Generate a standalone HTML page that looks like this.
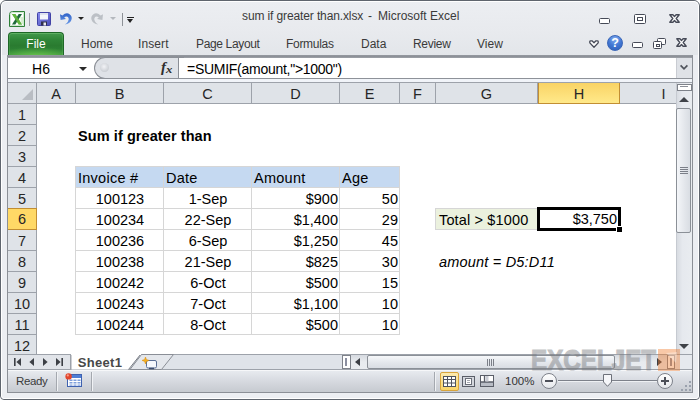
<!DOCTYPE html>
<html><head><meta charset="utf-8"><title>sum if greater than.xlsx - Microsoft Excel</title>
<style>
*{box-sizing:border-box;margin:0;padding:0}
html,body{width:700px;height:400px;overflow:hidden;background:#fff}
body{font-family:"Liberation Sans",sans-serif;position:relative}
.abs,.abs *{position:absolute}
svg{position:absolute;overflow:visible}
#win{position:absolute;left:0;top:0;width:700px;height:400px;background:#eceef2;border:1px solid #5f656e;border-radius:6px 6px 4px 4px;overflow:hidden}
#win:before{content:"";position:absolute;left:0;top:0;right:0;bottom:0;border:1px solid #fff;border-radius:5px 5px 3px 3px;z-index:50;pointer-events:none}
#stage{position:absolute;left:-1px;top:-1px;width:700px;height:400px}
#title{left:2px;top:2px;width:696px;height:30px;background:linear-gradient(#eceef2,#e8eaee)}
#tabs{left:2px;top:32px;width:696px;height:23px;background:linear-gradient(#e8eaee,#e3e6ea)}
.tt{position:absolute;top:9px;left:0;width:700px;text-align:center;font-size:12px;color:#3a3a3a;white-space:pre}
.tab{position:absolute;top:37px;font-size:12px;color:#3a3a3a;white-space:nowrap}
#file{left:8px;top:32px;width:56px;height:24px;border:1px solid #1e6727;border-bottom:none;border-radius:4px 4px 0 0;background:radial-gradient(ellipse 85% 50% at 50% 112%,#86d65e 0%,rgba(100,190,75,.85) 40%,rgba(60,150,60,0) 100%),linear-gradient(#43994b 0%,#2f8537 30%,#2a7b30 55%,#318a39 100%);box-shadow:inset 0 1px 0 rgba(150,220,150,.35),inset 1px 0 0 rgba(120,200,120,.25),inset -1px 0 0 rgba(120,200,120,.25);color:#fff;font-size:12px;text-align:center;line-height:22px}
#fbar{left:7px;top:55px;width:686px;height:28px;background:#dfe2e7}
#grid{left:8px;top:83px;width:668px;height:271px;background:#fff;overflow:hidden}
.ch{top:0;height:20px;background:#dfe3e8;border-right:1px solid #9da2aa;font-size:14.5px;color:#262626;text-align:center;line-height:22px}
.rh{left:0;width:29px;height:21px;background:#dfe3e8;border-right:1px solid #9da2aa;border-bottom:1px solid #9da2aa;font-size:14.5px;color:#262626;text-align:center;line-height:23px}
.c{height:22px;font-size:14.5px;line-height:23px;color:#000;white-space:nowrap;border:1px solid #d6d6d6;padding:0 2px}
.r{text-align:right}
.t{font-size:14.5px;line-height:23px;height:22px;color:#000;white-space:nowrap}
</style></head><body>
<div id="win"><div id="stage">
<div id="title" class="abs"></div>
<div id="tabs" class="abs"></div>
<div class="tt" style="left:242px;width:auto;letter-spacing:-.12px" id="t1">sum if greater than.xlsx</div>
<div class="tt" style="left:368px;width:auto">-</div>
<div class="tt" style="left:378px;width:auto" id="t2">Microsoft Excel</div>
<div id="file" class="abs">File</div>
<div class="tab" style="left:81px;letter-spacing:0px">Home</div>
<div class="tab" style="left:138px;letter-spacing:0.1px">Insert</div>
<div class="tab" style="left:196px;letter-spacing:-0.35px">Page Layout</div>
<div class="tab" style="left:286px;letter-spacing:-0.3px">Formulas</div>
<div class="tab" style="left:361px;letter-spacing:0px">Data</div>
<div class="tab" style="left:413px;letter-spacing:-0.3px">Review</div>
<div class="tab" style="left:477px;letter-spacing:0px">View</div>
<div id="fbar" class="abs">
<div style="left:0;top:0;width:686px;height:3px;background:linear-gradient(#969aa1,#8b8f96 60%,#a3a7ad)"></div>
<div style="left:0;top:3px;width:1px;height:25px;background:#8b8f96"></div>
<div style="left:1px;top:3px;width:100px;height:20px;background:#fff"></div>
<div style="left:1px;top:3px;width:66px;height:20px;font-size:14px;line-height:22px;text-align:center;color:#000" id="nb">H6</div>
<div style="left:72px;top:12px;width:0;height:0;border-left:4px solid transparent;border-right:4px solid transparent;border-top:4px solid #2a2a2a"></div>
<div style="left:87px;top:2px;width:90px;height:22px;border:1px solid #8b8f96;border-right:none;border-radius:11px 0 0 11px;background:#dfe2e7"></div>
<div style="left:93px;top:8px;width:9px;height:9px;border-radius:5px;background:radial-gradient(circle at 45% 40%,#f2f3f6,#c3c7cd 85%)"></div>
<div style="left:154px;top:3px;width:18px;height:20px;font-family:'Liberation Serif',serif;font-style:italic;font-weight:bold;font-size:15px;line-height:19px;color:#2e2e2e;white-space:nowrap" id="fx">f<span style="position:relative;top:1px;left:-.5px;font-size:11px;display:inline-block;transform:scaleX(1.15);transform-origin:0 50%">x</span></div>
<div style="left:171px;top:3px;width:1px;height:20px;background:#8b8f96"></div>
<div style="left:172px;top:3px;width:497px;height:20px;background:#fff"></div>
<div style="left:180px;top:3px;height:20px;font-size:14px;line-height:22px;letter-spacing:-.27px;color:#000;white-space:nowrap" id="ftxt">=SUMIF(amount,"&gt;1000")</div>
<div style="left:669px;top:3px;width:16px;height:20px;background:#dfe2e7;border-left:1px solid #c9ccd2"></div>
<svg style="left:672px;top:9px" width="10" height="8"><path d="M1.6 1.4 L5 4.8 L8.4 1.4" fill="none" stroke="#50545c" stroke-width="1.7"/></svg>
<div style="left:1px;top:23px;width:685px;height:1px;background:#8e9299"></div>
<div style="left:1px;top:24px;width:685px;height:3px;background:#f1f4f9"></div>
<div style="left:1px;top:27px;width:685px;height:1px;background:#9da2aa"></div>
</div>
<div id="grid" class="abs">
<div class="ch" style="left:0;width:29px"></div>
<svg style="left:14px;top:6px" width="12" height="12"><path d="M11 0 L11 11 L0 11 Z" fill="#b9bdc3"/></svg>
<div class="ch" style="left:29px;width:39px">A</div>
<div class="ch" style="left:68px;width:88px">B</div>
<div class="ch" style="left:156px;width:88px">C</div>
<div class="ch" style="left:244px;width:88px">D</div>
<div class="ch" style="left:332px;width:60px">E</div>
<div class="ch" style="left:392px;width:36px">F</div>
<div class="ch" style="left:428px;width:102px">G</div>
<div class="ch" style="left:530px;width:82px;background:linear-gradient(#f9d365,#ffe98a);border:1px solid #c28e33;border-top:none;border-bottom:none">H</div>
<div class="ch" style="left:612px;width:88px">I</div>
<div style="left:0;top:20px;width:668px;height:1px;background:#9da2aa"></div>
<div style="left:530px;top:20px;width:82px;height:1px;background:#c28e33"></div>
<div class="rh" style="top:21px">1</div>
<div class="rh" style="top:42px">2</div>
<div class="rh" style="top:63px">3</div>
<div class="rh" style="top:84px">4</div>
<div class="rh" style="top:105px">5</div>
<div class="rh" style="top:125px;height:22px;background:#ffd966;border:1px solid #c28e33;border-left:none;line-height:21px">6</div>
<div class="rh" style="top:147px">7</div>
<div class="rh" style="top:168px">8</div>
<div class="rh" style="top:189px">9</div>
<div class="rh" style="top:210px">10</div>
<div class="rh" style="top:231px">11</div>
<div class="rh" style="top:252px">12</div>
<div class="t" style="left:70px;top:42px;font-weight:bold;letter-spacing:.08px" id="ttl">Sum if greater than</div>
<div class="c " style="left:67px;top:83px;width:89px;background:#c5d9f1;letter-spacing:.25px;padding-left:2px;">Invoice #</div>
<div class="c " style="left:155px;top:83px;width:89px;background:#c5d9f1;letter-spacing:.25px;padding-left:2px;">Date</div>
<div class="c " style="left:243px;top:83px;width:89px;background:#c5d9f1;letter-spacing:.25px;padding-left:2px;">Amount</div>
<div class="c " style="left:331px;top:83px;width:61px;background:#c5d9f1;letter-spacing:.25px;padding-left:2px;">Age</div>
<div class="c " style="left:67px;top:104px;width:89px;text-align:center;padding:0 0 0 1px;">100123</div>
<div class="c " style="left:155px;top:104px;width:89px;text-align:center;padding:0 0 0 1px;">1-Sep</div>
<div class="c " style="left:243px;top:104px;width:89px;text-align:right;padding-right:1px;">$900</div>
<div class="c " style="left:331px;top:104px;width:61px;text-align:right;padding-right:1px;">50</div>
<div class="c " style="left:67px;top:125px;width:89px;text-align:center;padding:0 0 0 1px;">100234</div>
<div class="c " style="left:155px;top:125px;width:89px;text-align:center;padding:0 0 0 1px;">22-Sep</div>
<div class="c " style="left:243px;top:125px;width:89px;text-align:right;padding-right:1px;">$1,400</div>
<div class="c " style="left:331px;top:125px;width:61px;text-align:right;padding-right:1px;">29</div>
<div class="c " style="left:67px;top:146px;width:89px;text-align:center;padding:0 0 0 1px;">100236</div>
<div class="c " style="left:155px;top:146px;width:89px;text-align:center;padding:0 0 0 1px;">6-Sep</div>
<div class="c " style="left:243px;top:146px;width:89px;text-align:right;padding-right:1px;">$1,250</div>
<div class="c " style="left:331px;top:146px;width:61px;text-align:right;padding-right:1px;">45</div>
<div class="c " style="left:67px;top:167px;width:89px;text-align:center;padding:0 0 0 1px;">100238</div>
<div class="c " style="left:155px;top:167px;width:89px;text-align:center;padding:0 0 0 1px;">21-Sep</div>
<div class="c " style="left:243px;top:167px;width:89px;text-align:right;padding-right:1px;">$825</div>
<div class="c " style="left:331px;top:167px;width:61px;text-align:right;padding-right:1px;">30</div>
<div class="c " style="left:67px;top:188px;width:89px;text-align:center;padding:0 0 0 1px;">100242</div>
<div class="c " style="left:155px;top:188px;width:89px;text-align:center;padding:0 0 0 1px;">6-Oct</div>
<div class="c " style="left:243px;top:188px;width:89px;text-align:right;padding-right:1px;">$500</div>
<div class="c " style="left:331px;top:188px;width:61px;text-align:right;padding-right:1px;">15</div>
<div class="c " style="left:67px;top:209px;width:89px;text-align:center;padding:0 0 0 1px;">100243</div>
<div class="c " style="left:155px;top:209px;width:89px;text-align:center;padding:0 0 0 1px;">7-Oct</div>
<div class="c " style="left:243px;top:209px;width:89px;text-align:right;padding-right:1px;">$1,100</div>
<div class="c " style="left:331px;top:209px;width:61px;text-align:right;padding-right:1px;">10</div>
<div class="c " style="left:67px;top:230px;width:89px;text-align:center;padding:0 0 0 1px;">100244</div>
<div class="c " style="left:155px;top:230px;width:89px;text-align:center;padding:0 0 0 1px;">8-Oct</div>
<div class="c " style="left:243px;top:230px;width:89px;text-align:right;padding-right:1px;">$500</div>
<div class="c " style="left:331px;top:230px;width:61px;text-align:right;padding-right:1px;">10</div>
<div class="c " style="left:427px;top:125px;width:103px;background:#ebf1de;border-color:#d6d6d6;letter-spacing:.15px;padding-left:3px;">Total &gt; $1000</div>
<div style="left:529px;top:124px;width:84px;height:24px;border:3px solid #000;background:#fff"></div>
<div class="t r" style="left:532px;top:125px;width:77px;" id="h6">$3,750</div>
<div style="left:608px;top:143px;width:7px;height:7px;background:#000;border:1px solid #fff;border-right:none;border-bottom:none;width:6px;height:6px"></div>
<div class="t" style="left:431px;top:168px;font-style:italic;letter-spacing:.2px" id="g8">amount = D5:D11</div>
</div>
<div class="abs" id="qat" style="left:0;top:0;width:700px;height:56px">
<svg style="left:9px;top:11px" width="16" height="16" viewBox="0 0 16 16"><path d="M3.5 .5 H15.5 V15.5 H.5 V3.5 Q.5 .5 3.5 .5Z" fill="#fff" stroke="#2f8038" stroke-width="1"/><path d="M1.5 4 Q1.5 1.5 4 1.5 H14.5 V14.5 H1.5Z" fill="none" stroke="#cfe8cf" stroke-width="1"/><path d="M3 3 L6.3 3 L13 13.4 L9.7 13.4Z" fill="#3f9a3a"/><path d="M9.7 3 L13 3 L6.3 13.4 L3 13.4Z" fill="#1f6a3a"/><path d="M3 3 L6.3 3 L13 13.4 L9.7 13.4Z" fill="#6fbf3f" opacity=".75"/><path d="M11 6 L14 6 L14 13 L12.5 13Z" fill="#bfe3b4" opacity=".6"/></svg>
<div style="left:29px;top:13px;width:1px;height:13px;background:#9fa3a9"></div>
<svg style="left:37px;top:12px" width="14" height="14" viewBox="0 0 14 14"><defs><linearGradient id="sv" x1="0" y1="0" x2="1" y2="1"><stop offset="0" stop-color="#8a8df0"/><stop offset="1" stop-color="#4a4db8"/></linearGradient></defs><rect x=".5" y=".5" width="13" height="13" rx="1" fill="url(#sv)" stroke="#4243a6"/><rect x="3" y="1" width="8" height="6.5" fill="#f4f6fb"/><rect x="3" y="1" width="8" height="2" fill="#dfe4ef"/><rect x="4" y="9.5" width="6" height="4" fill="#30304a"/><rect x="6.5" y="10.5" width="2.5" height="3" fill="#e8e8f0"/></svg>
<svg style="left:59px;top:12px" width="14" height="14" viewBox="0 0 14 14"><defs><linearGradient id="ud" x1="0" y1="0" x2="0" y2="1"><stop offset="0" stop-color="#2f62c8"/><stop offset="1" stop-color="#6f9de8"/></linearGradient></defs><path d="M1 2.2 L1.6 8 L7 7 L5.2 5.4 Q7.4 3.6 9 5 Q10.6 6.8 9 9.4 Q8 11.2 5.6 12.6 Q11 11.6 12.4 8 Q13.6 4.4 10.6 2.2 Q7.2 0 3.4 3.6Z" fill="url(#ud)"/></svg>
<div style="left:78px;top:17px;width:0;height:0;border-left:3px solid transparent;border-right:3px solid transparent;border-top:3px solid #222"></div>
<svg style="left:90px;top:12px" width="14" height="14" viewBox="0 0 14 14"><path transform="translate(14,0) scale(-1,1)" d="M1 2.2 L1.6 8 L7 7 L5.2 5.4 Q7.4 3.6 9 5 Q10.6 6.8 9 9.4 Q8 11.2 5.6 12.6 Q11 11.6 12.4 8 Q13.6 4.4 10.6 2.2 Q7.2 0 3.4 3.6Z" fill="#bcc0c6"/></svg>
<div style="left:110px;top:17px;width:0;height:0;border-left:3px solid transparent;border-right:3px solid transparent;border-top:3px solid #b4b8be"></div>
<div style="left:122px;top:13px;width:1px;height:13px;background:#8d9197"></div>
<div style="left:127px;top:16.5px;width:7px;height:1px;background:#222"></div>
<div style="left:127px;top:19px;width:0;height:0;border-left:3.5px solid transparent;border-right:3.5px solid transparent;border-top:4px solid #222"></div>
<div style="left:599px;top:18px;width:11px;height:5.5px;border:1.5px solid #464a57;border-radius:1.5px;background:#fff"></div>
<div style="left:634px;top:14px;width:11.5px;height:9.5px;border:1.5px solid #464a57;border-radius:1.5px;background:#fff"></div>
<div style="left:637px;top:17px;width:5.5px;height:3.5px;border:1.2px solid #464a57;border-radius:.5px;background:#fff"></div>
<svg style="left:669px;top:14px" width="11" height="9" viewBox="0 0 11 9"><path d="M.8 .8 L3.9 .8 L5.5 2.5 L7.1 .8 L10.2 .8 L7.2 4.5 L10.2 8.2 L7.1 8.2 L5.5 6.5 L3.9 8.2 L.8 8.2 L3.8 4.5Z" fill="#fff" stroke="#464a57" stroke-width="1.4" stroke-linejoin="round"/></svg>
<svg style="left:589px;top:40px" width="10" height="8" viewBox="0 0 10 8"><path d="M.8 1.6 Q.8 .8 1.8 .8 L3 .8 L5 2.7 L7 .8 L8.2 .8 Q9.2 .8 9.2 1.6 L9.2 2.9 L5 7.2 L.8 2.9Z" fill="#fff" stroke="#464a57" stroke-width="1.3" stroke-linejoin="round"/></svg>
<div style="left:607px;top:35px;width:16px;height:16px;border-radius:8px;background:radial-gradient(circle at 50% 22%,#86aef0 0%,#4278d4 50%,#2d5db8 100%);border:1px solid #3a66b8"></div>
<div style="left:607px;top:35px;width:16px;height:16px;color:#fff;font-weight:bold;font-size:12.5px;line-height:16.5px;text-align:center">?</div>
<div style="left:632px;top:42px;width:11px;height:5.5px;border:1.5px solid #464a57;border-radius:1.5px;background:#fff"></div>
<div style="left:656.5px;top:38px;width:9px;height:7px;border:1.4px solid #464a57;border-radius:1.5px;background:#fff"></div>
<div style="left:653px;top:41px;width:9px;height:8px;border:1.4px solid #464a57;border-radius:1.5px;background:#fff"></div>
<div style="left:655.5px;top:43.5px;width:4px;height:3px;border:1px solid #464a57;background:#fff"></div>
<svg style="left:676px;top:38px" width="11" height="9" viewBox="0 0 11 9"><path d="M.8 .8 L3.9 .8 L5.5 2.5 L7.1 .8 L10.2 .8 L7.2 4.5 L10.2 8.2 L7.1 8.2 L5.5 6.5 L3.9 8.2 L.8 8.2 L3.8 4.5Z" fill="#fff" stroke="#464a57" stroke-width="1.4" stroke-linejoin="round"/></svg>
</div>
<div class="abs" id="vsb" style="left:676px;top:83px;width:16px;height:271px;background:linear-gradient(90deg,#d5d9df,#e6e9ee 40%,#e9ecf0)">
<div style="left:0;top:0;width:1px;height:271px;background:#c6cad1"></div>
<div style="left:1px;top:1px;width:15px;height:7px;border:1.5px solid #7e828a;background:#fff"></div>
<div style="left:4px;top:3px;width:8px;height:1px;background:#8b8f98"></div>
<div style="left:3px;top:13.5px;width:0;height:0;border-left:5px solid transparent;border-right:5px solid transparent;border-bottom:5px solid #3f4248"></div>
<div style="left:0px;top:25px;width:15px;height:125px;border:1px solid #8b9097;border-radius:2px;background:linear-gradient(90deg,#f4f6f9,#e3e6eb 60%,#d9dde3)"></div>
<div style="left:4px;top:84px;width:8px;height:1px;background:#7b7f88"></div>
<div style="left:4px;top:86px;width:8px;height:1px;background:#7b7f88"></div>
<div style="left:4px;top:88px;width:8px;height:1px;background:#7b7f88"></div>
<div style="left:4px;top:90px;width:8px;height:1px;background:#7b7f88"></div>
<div style="left:3px;top:260.5px;width:0;height:0;border-left:5px solid transparent;border-right:5px solid transparent;border-top:5px solid #3f4248"></div>
</div>
<div class="abs" id="tabbar" style="left:8px;top:354px;width:684px;height:16px;background:#dfe3e9">
<div style="left:0;top:0;width:684px;height:1px;background:#9da2aa"></div>
<div style="left:0;top:15px;width:684px;height:1px;background:#9da2aa"></div>
<div style="left:0;top:1px;width:63px;height:14px;background:#e1e4e9;border-right:1px solid #9da2aa"></div>
<svg style="left:6px;top:4px" width="50" height="9" viewBox="0 0 50 9"><rect x="0" y="0" width="1.6" height="8" fill="#3c3f45"/><path d="M7 0 L7 8 L2.4 4Z" fill="#3c3f45"/><path d="M20 0 L20 8 L15.4 4Z" fill="#3c3f45"/><path d="M29 0 L29 8 L33.6 4Z" fill="#3c3f45"/><path d="M42 0 L42 8 L46.6 4Z" fill="#3c3f45"/><rect x="47.4" y="0" width="1.6" height="8" fill="#3c3f45"/></svg>
<svg style="left:63px;top:0" width="120" height="16" viewBox="0 0 120 16"><path d="M0 0 L69.5 0 L57.5 15.5 L0 15.5Z" fill="#fff"/><path d="M69.5 .5 L57.5 15.5" stroke="#7b7f87" fill="none"/><path d="M0 .5 L0 16" stroke="#9da2aa" fill="none"/><path d="M0 0 L70 0" stroke="#fff" stroke-width="2.2"/><path d="M70.5 .5 L102.5 .5 L90.5 15.5 L59 15.5Z" fill="#e4e7ec" stroke="#8a8e96"/></svg>
<div style="left:63px;top:0px;width:58px;height:16px;font-weight:bold;font-size:13px;letter-spacing:.35px;line-height:17px;color:#484848;text-align:center" id="sh1">Sheet1</div>
<svg style="left:133.5px;top:2.5px" width="16" height="13" viewBox="0 0 16 13"><rect x="4.5" y="3.5" width="10" height="7.5" rx="1.5" fill="#f6f8fc" stroke="#5b6f95"/><path d="M7 11.5 L12 11.5" stroke="#3f4f70" stroke-width="1.4"/><path d="M3.5 0 L4.4 2.4 L7 3.4 L4.4 4.4 L3.5 7 L2.6 4.4 L0 3.4 L2.6 2.4Z" fill="#f5b01c" stroke="#d98a10" stroke-width=".5"/></svg>
<div style="left:334px;top:1px;width:9px;height:14px;border:1px solid #7e828a;background:#fff"></div>
<div style="left:337px;top:4px;width:2px;height:8px;background:#8b8fa0"></div>
<div style="left:343px;top:1px;width:325px;height:14px;background:linear-gradient(#d6dae0,#e8ebef 50%,#e9ecf0)"></div>
<div style="left:347px;top:4px;width:0;height:0;border-top:4.5px solid transparent;border-bottom:4.5px solid transparent;border-right:5px solid #3c3f45"></div>
<div style="left:359px;top:1px;width:248px;height:14px;border:1px solid #8b9097;border-radius:2px;background:linear-gradient(#f6f8fa,#e4e7ec 55%,#d9dde3)"></div>
<div style="left:479px;top:5px;width:1px;height:7px;background:#7b7f88"></div>
<div style="left:481px;top:5px;width:1px;height:7px;background:#7b7f88"></div>
<div style="left:483px;top:5px;width:1px;height:7px;background:#7b7f88"></div>
<div style="left:485px;top:5px;width:1px;height:7px;background:#7b7f88"></div>
<div style="left:649px;top:4px;width:0;height:0;border-top:4.5px solid transparent;border-bottom:4.5px solid transparent;border-left:5px solid #3c3f45"></div>
<div style="left:659px;top:1px;width:8px;height:14px;border:1px solid #7e828a;background:#fff"></div>
<div style="left:662px;top:4px;width:2px;height:8px;background:#8b8fa0"></div>
<div style="left:668px;top:1px;width:16px;height:14px;background:#e6e9ee"></div>
</div>
<div class="abs" id="status" style="left:8px;top:370px;width:684px;height:23px;background:linear-gradient(#e9ecf0 0%,#dadde3 40%,#c6cad0 100%);border-bottom:1px solid #8b8f96">
<div style="left:0;top:0;width:684px;height:1px;background:#f6f7f9"></div>
<div style="left:8px;top:3px;font-size:11.5px;letter-spacing:-.4px;line-height:16px;color:#3a3a3a" id="rdy">Ready</div>
<div style="left:48px;top:2px;width:1px;height:19px;background:#a4a8af"></div><div style="left:49px;top:2px;width:1px;height:19px;background:#f0f2f5"></div>
<div style="left:83px;top:2px;width:1px;height:19px;background:#a4a8af"></div><div style="left:84px;top:2px;width:1px;height:19px;background:#f0f2f5"></div>
<svg style="left:57px;top:3px" width="17" height="15" viewBox="0 0 17 15"><rect x="2.5" y="1.5" width="14" height="12" fill="#fff" stroke="#3f62b0"/><rect x="3" y="2" width="13" height="3" fill="#4f7fd6"/><g fill="#7f9fdc"><rect x="4.5" y="6.5" width="3" height="1.5"/><rect x="8.5" y="6.5" width="3" height="1.5"/><rect x="12.5" y="6.5" width="3" height="1.5"/><rect x="4.5" y="9" width="3" height="1.5"/><rect x="8.5" y="9" width="3" height="1.5"/><rect x="12.5" y="9" width="3" height="1.5"/><rect x="4.5" y="11.5" width="3" height="1.2"/><rect x="8.5" y="11.5" width="3" height="1.2"/><rect x="12.5" y="11.5" width="3" height="1.2"/></g><circle cx="3.6" cy="3.4" r="3.2" fill="#e2452c"/><circle cx="2.8" cy="2.4" r="1.1" fill="#f7a08c"/></svg>
<div style="left:426px;top:2px;width:1px;height:19px;background:#a4a8af"></div><div style="left:427px;top:2px;width:1px;height:19px;background:#f0f2f5"></div>
<div style="left:432px;top:2px;width:19px;height:19px;border:1px solid #d9a53c;border-radius:2px;background:linear-gradient(#fdebb0,#fad468)"></div>
<svg style="left:435px;top:6px" width="13" height="11" viewBox="0 0 13 11"><rect x="0" y="0" width="13" height="11" fill="#4f535e"/><g fill="#fff"><rect x="1" y="1" width="3" height="2"/><rect x="5" y="1" width="3" height="2"/><rect x="9" y="1" width="3" height="2"/><rect x="1" y="4" width="3" height="2.5"/><rect x="5" y="4" width="3" height="2.5"/><rect x="9" y="4" width="3" height="2.5"/><rect x="1" y="7.5" width="3" height="2.5"/><rect x="5" y="7.5" width="3" height="2.5"/><rect x="9" y="7.5" width="3" height="2.5"/></g></svg>
<svg style="left:454px;top:6px" width="13" height="11" viewBox="0 0 13 11"><rect x=".5" y=".5" width="12" height="10" fill="#d4d7dd" stroke="#5a5e68"/><rect x="3.5" y="2.5" width="6" height="6" fill="#fff" stroke="#6a6e78"/><path d="M5 4.5 H8 M5 6.5 H8" stroke="#8a8e98" stroke-width=".8"/></svg>
<svg style="left:472px;top:5px" width="14" height="12" viewBox="0 0 14 12"><rect x=".5" y=".5" width="13" height="11" fill="#fff" stroke="#5a5e68"/><rect x="1" y="7" width="12" height="4" fill="#b9bdc6"/><path d="M4.5 .5 V7 M.5 7 H13.5" stroke="#5a5e68" stroke-width="1.3"/><rect x="5.5" y="1" width="3" height="5.5" fill="#c9ccd4"/></svg>
<div style="left:497px;top:3px;font-size:11.5px;line-height:16px;color:#333" id="zm">100%</div>
<div style="left:533px;top:3px;width:16px;height:16px;border-radius:8px;border:1px solid #7d818a;background:linear-gradient(#fefefe,#e6e8ec)"></div>
<div style="left:537px;top:10px;width:8px;height:2px;background:#4d5059"></div>
<div style="left:550px;top:10px;width:99px;height:1px;background:#7d818a"></div><div style="left:550px;top:11px;width:99px;height:1px;background:#eef0f3"></div>
<svg style="left:595px;top:4px" width="9" height="13" viewBox="0 0 9 13"><path d="M.5 .5 H8.5 V8 L4.5 12.3 L.5 8Z" fill="#f5f6f9" stroke="#6d717a"/></svg>
<div style="left:649px;top:3px;width:16px;height:16px;border-radius:8px;border:1px solid #7d818a;background:linear-gradient(#fefefe,#e6e8ec)"></div>
<div style="left:653px;top:10px;width:8px;height:2px;background:#4d5059"></div><div style="left:656px;top:7px;width:2px;height:8px;background:#4d5059"></div>
<div style="left:681px;top:11px;width:2px;height:2px;background:#9aa1ad"></div>
<div style="left:677px;top:15px;width:2px;height:2px;background:#9aa1ad"></div>
<div style="left:681px;top:15px;width:2px;height:2px;background:#9aa1ad"></div>
<div style="left:673px;top:19px;width:2px;height:2px;background:#9aa1ad"></div>
<div style="left:677px;top:19px;width:2px;height:2px;background:#9aa1ad"></div>
<div style="left:681px;top:19px;width:2px;height:2px;background:#9aa1ad"></div>
</div>
<div class="abs" style="left:7px;top:83px;width:1px;height:310px;background:#8b8f96"></div>
<div class="abs" style="left:692px;top:55px;width:1px;height:338px;background:#8b8f96"></div>
<div class="abs" id="wm" style="left:531px;top:345px;width:160px;height:36px">
<div style="left:0;top:0;font-weight:bold;font-size:29px;line-height:30px;color:#787a7e;-webkit-text-stroke:1.1px #787a7e;opacity:.45;transform-origin:0 0;transform:scaleX(.835);white-space:nowrap" id="wmt">EXCELJET</div>
<div style="left:127px;top:4px;width:22px;height:22px;background:rgba(240,125,45,.42)"></div>
<svg style="left:127px;top:4px" width="22" height="22" viewBox="0 0 22 22"><path d="M8 4 L19 3 L18 14Z" fill="rgba(255,255,255,.35)"/></svg>
</div>
</div></div>
</body></html>
